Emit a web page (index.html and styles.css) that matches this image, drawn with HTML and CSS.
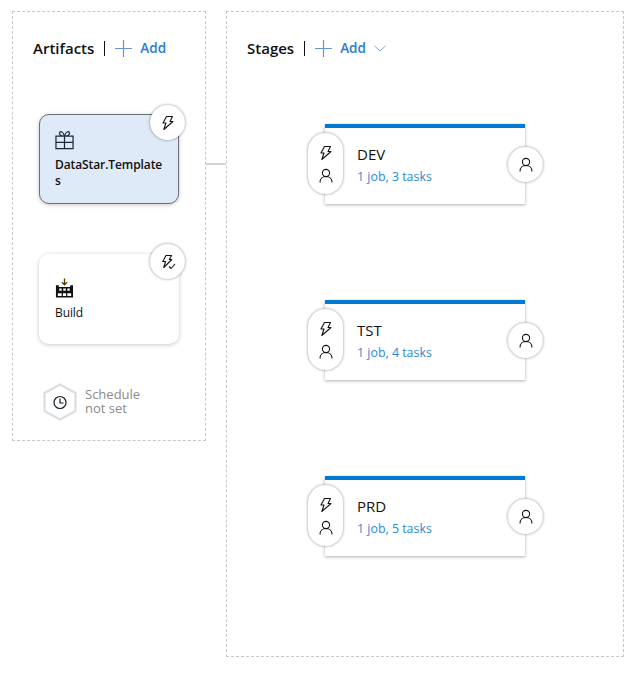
FILE: index.html
```html
<!DOCTYPE html>
<html lang="en">
<head>
<meta charset="utf-8">
<title>Pipeline</title>
<link rel="stylesheet" href="styles.css">
</head>
<body>
<svg class="defs" width="0" height="0" aria-hidden="true">
  <defs>
    <symbol id="bolt" viewBox="0 0 16 16"><path d="M6.500 1.500h6l-2.500 5h3L3.800 14.500 6 8H3z" fill="none" stroke="currentColor" stroke-width="1.100" stroke-linejoin="round"/></symbol>
    <symbol id="person" viewBox="0 0 16 16"><circle cx="8" cy="5" r="3.600" fill="none" stroke="currentColor" stroke-width="1.100"/><path d="M2 14.500c0-3.500 2.400-6 6-6s6 2.500 6 6" fill="none" stroke="currentColor" stroke-width="1.100"/></symbol>
    <symbol id="plus" viewBox="0 0 17 17"><path d="M8.500 0v17M0 8.500h17" fill="none" stroke="currentColor" stroke-width="1.200"/></symbol>
  </defs>
</svg>
<main class="canvas">
  <section class="panel artifacts">
    <header class="head">
      <h2 class="title">Artifacts</h2>
      <span class="sep"></span>
      <svg class="plus"><use href="#plus"/></svg>
      <span class="add">Add</span>
    </header>
    <article class="art selected">
      <svg class="art-icon" viewBox="0 0 20 20"><path d="M1 6h18v13H1zM1 12.500h18M10 6v13M10 6C8.500 .5 5 .2 4.700 2.800 4.500 5 8 6 10 6M10 6c1.500-5.500 5-5.800 5.300-3.200.2 2.200-3.300 3.200-5.300 3.200" fill="none" stroke="currentColor" stroke-width="1.300"/></svg>
      <div class="art-name strong">DataStar.Templates</div>
      <span class="badge art-badge"><svg class="ico"><use href="#bolt"/></svg></span>
    </article>
    <article class="art">
      <svg class="art-icon" viewBox="0 0 20 20"><path d="M10 0v6.500M7.300 4 10 6.700 12.700 4" fill="none" stroke="#5a3a00" stroke-width="1.400"/><path d="M1 7h3v2h12V7h3v13H1z" fill="#111"/><path d="M4.500 10.500h2.500v2.500H4.500zM8.700 10.500h2.600v2.500H8.700zM13 10.500h2.500v2.500H13zM3 15.500h4v3H3zM8.300 15.500h3.400v3H8.300zM13 15.500h4v3h-4z" fill="#fff"/></svg>
      <div class="art-name">Build</div>
      <span class="badge art-badge">
        <svg class="ico" viewBox="0 0 16 16"><path d="M6 1.500h5.500L9.300 5.500h2.500L3.800 13.500 5.500 7.500H2.800z" fill="none" stroke="currentColor" stroke-width="1.100" stroke-linejoin="round"/><path d="M9 12.500l2 2 4-4.500" fill="none" stroke="currentColor" stroke-width="1.100"/></svg>
      </span>
    </article>
    <div class="schedule">
      <svg class="hex" viewBox="0 0 34 38">
        <path d="M17 1.500 32.500 10v18L17 36.500 1.500 28V10z" fill="#fff" stroke="#dedede" stroke-width="2.200"/>
        <circle cx="17" cy="19.500" r="6" fill="none" stroke="#111c28" stroke-width="1.200"/>
        <path d="M17 15.500v4.500h3.500" fill="none" stroke="#111c28" stroke-width="1.200"/>
      </svg>
      <div class="schedule-text">Schedule<br>not set</div>
    </div>
    <span class="link"></span>
  </section>
  <section class="panel stages">
    <header class="head">
      <h2 class="title">Stages</h2>
      <span class="sep"></span>
      <svg class="plus"><use href="#plus"/></svg>
      <span class="add">Add</span>
      <svg class="chev" viewBox="0 0 12 7"><path d="M.5.800 6 6l5.500-5.200" fill="none" stroke="currentColor" stroke-width="1"/></svg>
    </header>
    <div class="stage-list">
      <article class="stage">
        <div class="stage-name">DEV</div>
        <div class="stage-meta">1 job, 3 tasks</div>
        <span class="pill"><svg class="ico"><use href="#bolt"/></svg><svg class="ico"><use href="#person"/></svg></span>
        <span class="badge post"><svg class="ico"><use href="#person"/></svg></span>
      </article>
      <article class="stage">
        <div class="stage-name">TST</div>
        <div class="stage-meta">1 job, 4 tasks</div>
        <span class="pill"><svg class="ico"><use href="#bolt"/></svg><svg class="ico"><use href="#person"/></svg></span>
        <span class="badge post"><svg class="ico"><use href="#person"/></svg></span>
      </article>
      <article class="stage">
        <div class="stage-name">PRD</div>
        <div class="stage-meta">1 job, 5 tasks</div>
        <span class="pill"><svg class="ico"><use href="#bolt"/></svg><svg class="ico"><use href="#person"/></svg></span>
        <span class="badge post"><svg class="ico"><use href="#person"/></svg></span>
      </article>
    </div>
  </section>
</main>
</body>
</html>
```

FILE: styles.css
```css
* { box-sizing: border-box; }
html, body { margin: 0; background: #fff; }
body {
  width: 638px;
  height: 673px;
  overflow: hidden;
  font-family: "Open Sans", "Noto Sans", sans-serif;
  color: #111;
}
.defs { position: absolute; }
.canvas {
  display: flex;
  align-items: flex-start;
  gap: 20px;
  padding: 11px 0 0 12px;
}
.panel {
  position: relative;
  border: 1px dashed #c8c8c8;
}
.artifacts {
  width: 194px;
  height: 430px;
  padding: 0 26px;
}
.stages {
  width: 398px;
  height: 646px;
  padding: 0 20px;
}
.head {
  display: flex;
  align-items: center;
  height: 20px;
  margin-top: 26px;
  margin-left: -6px;
}
.stages .head { margin-left: 0; }
.title {
  margin: 0;
  font-size: 15px;
  font-weight: 600;
  color: #111;
}
.sep {
  width: 1px;
  height: 15px;
  margin: 0 10px 0 10px;
  background: #111;
}
.plus {
  width: 17px;
  height: 17px;
  color: #6a93d6;
}
.add {
  margin-left: 8px;
  font-size: 13.500px;
  font-weight: 600;
  color: #2b7cd3;
}
.chev {
  width: 12px;
  height: 7px;
  margin-left: 8px;
  color: #7ba6dc;
}
.art {
  position: relative;
  width: 140px;
  height: 90px;
  margin-top: 56px;
  padding: 24px 16px 0;
  background: #fff;
  border-radius: 10px;
  box-shadow: 0 1px 4px rgba(0, 0, 0, .22);
}
.art + .art { margin-top: 50px; }
.art.selected {
  background: #deeaf7;
  border: 1px solid #6b6f75;
  padding: 15px 15px 0;
}
.art-icon {
  display: block;
  width: 19px;
  height: 20px;
  color: #1b2a3a;
}
.art-name {
  margin-top: 7px;
  font-size: 12px;
  line-height: 16px;
  letter-spacing: -0.1px;
  word-break: break-all;
}
.art-name.strong {
  font-weight: 600;
}
.badge {
  position: absolute;
  display: flex;
  align-items: center;
  justify-content: center;
  width: 35px;
  height: 35px;
  background: #fff;
  border-radius: 50%;
  box-shadow: 0 0 3px rgba(0, 0, 0, .45);
}
.art-badge { top: -10px; right: -6px; }
.selected .art-badge { top: -10px; right: -7px; }
.ico {
  display: block;
  width: 16px;
  height: 16px;
  color: #111;
}
.schedule {
  display: flex;
  align-items: center;
  gap: 8px;
  margin-top: 39px;
  margin-left: 4px;
}
.hex {
  width: 34px;
  height: 38px;
  flex: none;
}
.schedule-text {
  margin-top: -2px;
  font-size: 13px;
  line-height: 14px;
  color: #8a8a8a;
}
.link {
  position: absolute;
  top: 151px;
  right: -21px;
  width: 20px;
  height: 2px;
  background: #d4d4d4;
}
.stage-list {
  display: flex;
  flex-direction: column;
  gap: 96px;
  margin-top: 66px;
  margin-left: 78px;
}
.stage {
  position: relative;
  width: 200px;
  height: 80px;
  padding: 16px 32px;
  background: #fff;
  border-top: 4px solid #0078d4;
  box-shadow: 0 1px 3px rgba(0, 0, 0, .32);
}
.stage-name {
  font-size: 15px;
  line-height: 20px;
  color: #111;
}
.stage-meta {
  margin-top: 5px;
  font-size: 12.400px;
  line-height: 16px;
  color: #2b88d8;
}
.pill {
  position: absolute;
  top: 5px;
  left: -17px;
  display: flex;
  flex-direction: column;
  align-items: center;
  justify-content: center;
  gap: 7px;
  width: 35px;
  height: 61px;
  padding-top: 2px;
  background: #fff;
  border-radius: 18px;
  box-shadow: 0 0 3px rgba(0, 0, 0, .45);
}
.post {
  top: 19px;
  right: -18px;
}
```
